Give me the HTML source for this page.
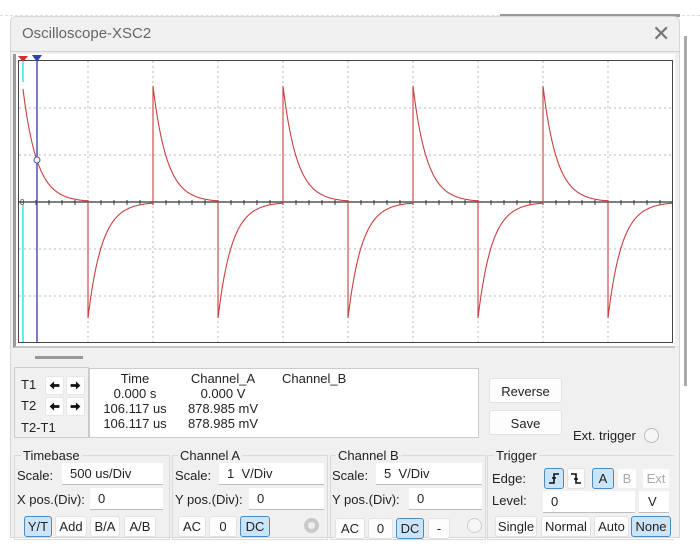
<!DOCTYPE html>
<html><head><meta charset="utf-8">
<style>
*{box-sizing:border-box;margin:0;padding:0}
body{width:700px;height:552px;background:#fff;position:relative;overflow:hidden;font-family:"Liberation Sans",sans-serif;font-size:13px;color:#222}
.a{position:absolute}
.win{left:10px;top:16px;width:670px;height:522px;background:#f0f0f0;border:1px solid #d6d6d6;border-radius:6px 6px 0 0}
.title{left:22px;top:25px;font-size:15px;color:#666}
.inp{position:absolute;background:#fff;border-bottom:1px solid #bdbdbd;height:22px;padding:3px 0 0 8px;font-size:13px}
.btn{position:absolute;background:#fdfdfd;border:1px solid #e2e2e2;border-radius:3px;height:21px;text-align:center;font-size:13px;padding-top:2px}
.sel{background:#cce4f7;border:1px solid #4a8cc2}
.grp{position:absolute;border:1px solid #dadada;top:455px;height:85px}
.lbl{position:absolute;font-size:13px}
.ar{position:absolute;width:19px;height:19px;background:#fdfdfd;border:1px solid #e6e6e6;border-radius:2px}
</style></head><body>
<div class="a" style="left:0;top:15px;width:700px;height:1px;border-top:1px dashed #ddd"></div>
<div class="a" style="left:500px;top:14px;width:180px;height:3px;background:#999"></div>
<div class="a" style="left:684px;top:36px;width:3px;height:350px;background:#aaa"></div>
<div class="a win"></div>
<div class="a title">Oscilloscope-XSC2</div>
<div class="a" style="left:652px;top:21px;font-size:22px;color:#777">✕</div>
<div class="a" style="left:11px;top:51px;width:668px;height:1px;background:#d0d0d0"></div>
<div class="a" style="left:13px;top:54px;width:662px;height:294px;background:#fff;border-left:3px solid #9a9a9a;border-bottom:2px solid #c8c8c8"></div>
<svg class="a" style="left:0;top:0" width="700" height="360">
<rect x="18.5" y="60.5" width="654" height="282" fill="#fff" stroke="#444" stroke-width="1"/>
<g id="grid" stroke="#b8b8b8" stroke-dasharray="2,3" stroke-width="1"></g>
<line x1="18" y1="202" x2="673" y2="202" stroke="#333" stroke-width="1.2"/>
<g id="ticks" stroke="#333"></g>
<path id="wave" fill="none" stroke="#c84040" stroke-width="1.1"/>
<line x1="23" y1="62" x2="23" y2="82" stroke="#6ee" stroke-width="2"/>
<line x1="23" y1="205" x2="23" y2="342" stroke="#6ee" stroke-width="2"/>
<line x1="37" y1="58" x2="37" y2="342" stroke="#5050b8" stroke-width="1.5"/>
<polygon points="18,56 28,56 23,62" fill="#d03030"/>
<polygon points="32,55 42,55 37,62" fill="#3040b0"/>
<circle cx="37" cy="160" r="3" fill="#fff" stroke="#5050b8"/>
<text x="20" y="205" font-size="8" fill="#333" font-family="Liberation Sans">0</text>
</svg>
<script>
var g=document.getElementById('grid'),s='';
for(var i=1;i<10;i++){var x=23+65*i;s+='<line x1="'+x+'" y1="61" x2="'+x+'" y2="342"/>';}
[108,155,249,296].forEach(function(y){s+='<line x1="19" y1="'+y+'" x2="672" y2="'+y+'"/>';});
g.innerHTML=s;
var t='';for(var x=36;x<673;x+=13){t+='<line x1="'+x+'" y1="200" x2="'+x+'" y2="205"/>';}
document.getElementById('ticks').innerHTML=t;
var d='M23 89';
function dec(x0,x1,sgn){for(var x=x0+1;x<=x1;x++){var f=Math.exp(-(x-x0)/14);d+=' L'+x+' '+(202+sgn*116*f).toFixed(1);}}
for(var x=23;x<=88;x++){d+=' L'+x+' '+(202-113*Math.exp(-(x-23)/14)).toFixed(1);}
var p=88,neg=true;
while(p<672){d+=' L'+p+' '+(neg?318:86);var e=Math.min(p+65,672);dec(p,e,neg?1:-1);p+=65;neg=!neg;}
document.getElementById('wave').setAttribute('d',d);
</script>
<div class="a" style="left:35px;top:356px;width:48px;height:3px;background:#999"></div>
<div class="a" style="left:14px;top:367px;width:75px;height:71px;border:1px solid #ccc;background:#f0f0f0"></div>
<div class="lbl" style="left:21px;top:377px">T1</div>
<div class="lbl" style="left:21px;top:398px">T2</div>
<div class="lbl" style="left:21px;top:420px">T2-T1</div>
<svg width="0" height="0" style="position:absolute"><defs>
<symbol id="la" viewBox="0 0 19 19"><path d="M4 9.5 L9 5 L9 8 L15 8 L15 11 L9 11 L9 14 Z" fill="#111"/></symbol>
<symbol id="ra" viewBox="0 0 19 19"><path d="M15 9.5 L10 5 L10 8 L4 8 L4 11 L10 11 L10 14 Z" fill="#111"/></symbol>
</defs></svg>
<div class="ar" style="left:45px;top:376px"><svg width="17" height="17" viewBox="0 0 19 19"><use href="#la"/></svg></div>
<div class="ar" style="left:66px;top:376px"><svg width="17" height="17" viewBox="0 0 19 19"><use href="#ra"/></svg></div>
<div class="ar" style="left:45px;top:397px"><svg width="17" height="17" viewBox="0 0 19 19"><use href="#la"/></svg></div>
<div class="ar" style="left:66px;top:397px"><svg width="17" height="17" viewBox="0 0 19 19"><use href="#ra"/></svg></div>
<div class="a" style="left:89px;top:368px;width:390px;height:70px;background:#fff;border:1px solid #ccc"></div>
<div class="a" style="left:90px;top:371px;width:90px;text-align:center;line-height:15px">Time<br>0.000 s<br>106.117 us<br>106.117 us</div>
<div class="a" style="left:178px;top:371px;width:90px;text-align:center;line-height:15px">Channel_A<br>0.000 V<br>878.985 mV<br>878.985 mV</div>
<div class="a" style="left:282px;top:371px;line-height:15px">Channel_B</div>
<div class="btn" style="left:489px;top:378px;width:73px;height:25px;padding-top:5px">Reverse</div>
<div class="btn" style="left:489px;top:410px;width:73px;height:25px;padding-top:5px">Save</div>
<div class="lbl" style="left:573px;top:428px">Ext. trigger</div>
<div class="a" style="left:644px;top:428px;width:15px;height:15px;border-radius:50%;border:1px solid #bbb;background:#f6f6f6"></div>

<div class="grp" style="left:14px;width:156px"></div>
<div class="lbl" style="left:21px;top:448px;background:#f0f0f0;padding:0 2px">Timebase</div>
<div class="lbl" style="left:17px;top:468px">Scale:</div>
<div class="inp" style="left:62px;top:463px;width:101px">500 us/Div</div>
<div class="lbl" style="left:17px;top:492px">X pos.(Div):</div>
<div class="inp" style="left:90px;top:488px;width:73px">0</div>
<div class="btn sel" style="left:24px;top:516px;width:28px">Y/T</div>
<div class="btn" style="left:55px;top:516px;width:32px">Add</div>
<div class="btn" style="left:90px;top:516px;width:30px">B/A</div>
<div class="btn" style="left:124px;top:516px;width:32px">A/B</div>

<div class="grp" style="left:172px;width:156px"></div>
<div class="lbl" style="left:178px;top:448px;background:#f0f0f0;padding:0 2px">Channel A</div>
<div class="lbl" style="left:175px;top:468px">Scale:</div>
<div class="inp" style="left:219px;top:463px;width:105px">1&nbsp; V/Div</div>
<div class="lbl" style="left:175px;top:492px">Y pos.(Div):</div>
<div class="inp" style="left:249px;top:488px;width:75px">0</div>
<div class="btn" style="left:178px;top:516px;width:28px">AC</div>
<div class="btn" style="left:209px;top:516px;width:28px">0</div>
<div class="btn sel" style="left:240px;top:516px;width:30px">DC</div>
<div class="a" style="left:304px;top:518px;width:15px;height:15px;border-radius:50%;border:4px solid #c8c8c8;background:#eee"></div>

<div class="grp" style="left:330px;width:156px"></div>
<div class="lbl" style="left:336px;top:448px;background:#f0f0f0;padding:0 2px">Channel B</div>
<div class="lbl" style="left:332px;top:468px">Scale:</div>
<div class="inp" style="left:376px;top:463px;width:106px">5&nbsp; V/Div</div>
<div class="lbl" style="left:332px;top:492px">Y pos.(Div):</div>
<div class="inp" style="left:409px;top:488px;width:73px">0</div>
<div class="btn" style="left:335px;top:518px;width:30px">AC</div>
<div class="btn" style="left:368px;top:518px;width:25px">0</div>
<div class="btn sel" style="left:396px;top:518px;width:28px">DC</div>
<div class="btn" style="left:428px;top:518px;width:22px">-</div>
<div class="a" style="left:467px;top:518px;width:15px;height:15px;border-radius:50%;border:1px solid #ccc;background:#f6f6f6"></div>

<div class="grp" style="left:487px;width:187px;border-right:none"></div>
<div class="lbl" style="left:494px;top:448px;background:#f0f0f0;padding:0 2px">Trigger</div>
<div class="lbl" style="left:492px;top:471px">Edge:</div>
<div class="btn sel" style="left:544px;top:468px;width:20px;padding:0"><svg width="18" height="19"><path d="M4 14 H9 V5 H14 M7 9 H11" stroke="#111" stroke-width="1.6" fill="none"/></svg></div>
<div class="btn" style="left:567px;top:468px;width:18px;padding:0"><svg width="16" height="19"><path d="M3 5 H8 V14 H13 M6 10 H10" stroke="#111" stroke-width="1.6" fill="none"/></svg></div>
<div class="btn sel" style="left:592px;top:468px;width:22px">A</div>
<div class="btn" style="left:617px;top:468px;width:20px;color:#aaa;border-color:#f0f0f0">B</div>
<div class="btn" style="left:642px;top:468px;width:28px;color:#aaa;border-color:#f0f0f0">Ext</div>
<div class="lbl" style="left:492px;top:493px">Level:</div>
<div class="inp" style="left:543px;top:491px;width:92px">0</div>
<div class="inp" style="left:639px;top:491px;width:30px;padding-left:9px">V</div>
<div class="btn" style="left:495px;top:516px;width:42px">Single</div>
<div class="btn" style="left:541px;top:516px;width:50px">Normal</div>
<div class="btn" style="left:594px;top:516px;width:35px">Auto</div>
<div class="btn sel" style="left:631px;top:516px;width:40px">None</div>
</body></html>
